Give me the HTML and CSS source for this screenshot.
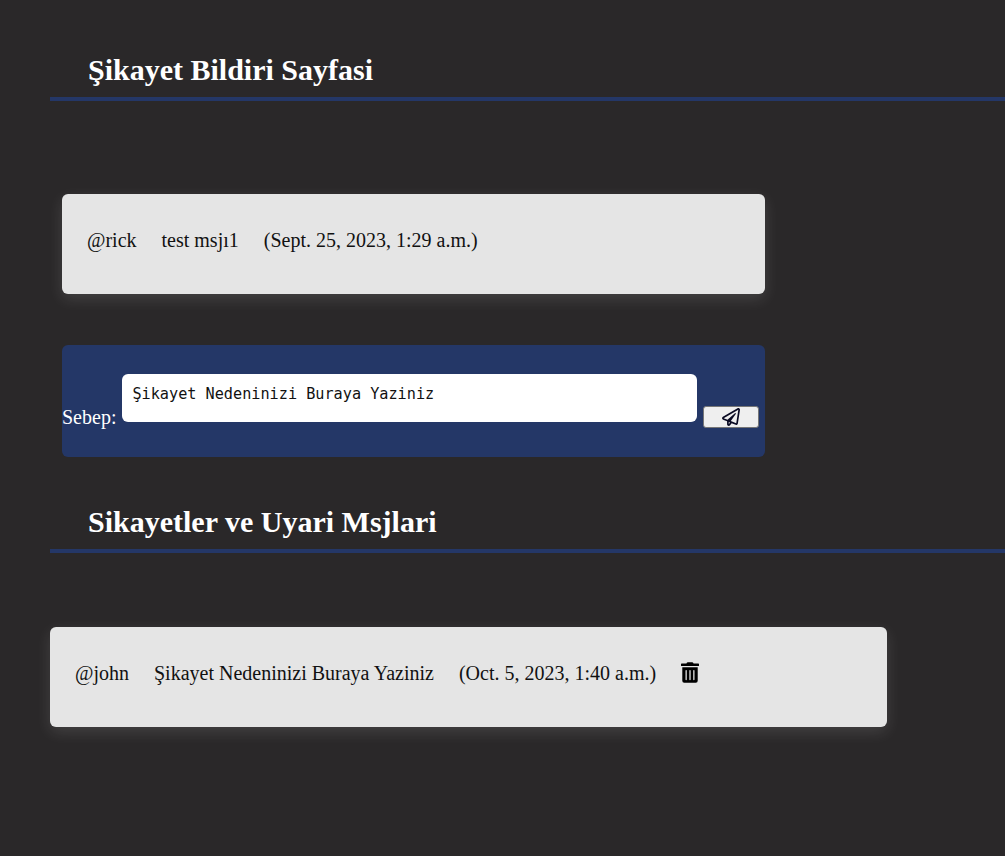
FILE: index.html

```html
<!DOCTYPE html>
<html lang="tr">
<head>
    <meta charset="UTF-8">
    <meta name="viewport" content="width=device-width, initial-scale=1.0">
    <title>Şikayet Bildiri Sayfasi</title>
    <link rel="stylesheet" href="styles.css">
</head>
<body>

    <div class="page">
        <h2 class="section-title">Şikayet Bildiri Sayfasi</h2>

        <div class="msg-card msg-card-top">
            <span class="msg-part">@rick</span>
            <span class="msg-part">test msjı1</span>
            <span class="msg-part">(Sept. 25, 2023, 1:29 a.m.)</span>
        </div>

        <form class="report-form">
            <label class="report-label" for="sebep">Sebep:</label>
            <textarea class="report-input" id="sebep" name="sebep">Şikayet Nedeninizi Buraya Yaziniz</textarea>
            <button class="report-send" type="button" aria-label="Gönder">
                <svg class="send-icon" viewBox="0 0 512 512"><path d="M440 6.5L24 246.4c-34.4 19.9-31.1 70.8 5.7 85.9L144 379.6V464c0 46.4 59.2 65.5 86.6 28.6l43.8-59.1 111.9 46.2c5.9 2.4 12.1 3.6 18.3 3.6 8.2 0 16.3-2.1 23.6-6.2 12.8-7.2 21.6-20 23.9-34.5l59.4-387.2c6.1-40.1-36.9-68.8-71.5-48.9zM192 464v-64.6l36.6 15.1L192 464zm212.6-28.7l-153.8-63.5L391 169.5c10.7-15.5-9.5-33.5-23.7-21.2L155.8 332.6 48 288 464 48l-59.4 387.3z"/></svg>
            </button>
        </form>

        <h2 class="section-title section-title-second">Sikayetler ve Uyari Msjlari</h2>

        <div class="msg-card msg-card-wide">
            <span class="msg-part">@john</span>
            <span class="msg-part">Şikayet Nedeninizi Buraya Yaziniz</span>
            <span class="msg-part">(Oct. 5, 2023, 1:40 a.m.)</span>
            <a class="msg-delete" href="#" aria-label="Sil">
                <svg class="trash-icon" viewBox="0 0 448 512"><path d="M32 464a48 48 0 0 0 48 48h288a48 48 0 0 0 48-48V128H32zm272-256a16 16 0 0 1 32 0v224a16 16 0 0 1-32 0zm-96 0a16 16 0 0 1 32 0v224a16 16 0 0 1-32 0zm-96 0a16 16 0 0 1 32 0v224a16 16 0 0 1-32 0zM432 32H312l-9.4-18.7A24 24 0 0 0 281.1 0H166.8a23.72 23.72 0 0 0-21.4 13.3L136 32H16A16 16 0 0 0 0 48v32a16 16 0 0 0 16 16h416a16 16 0 0 0 16-16V48a16 16 0 0 0-16-16z"/></svg>
            </a>
        </div>
    </div>

</body>
</html>
```

FILE: styles.css

```css
body {
    font-family: "Liberation Serif", "Times New Roman", serif;
    background-color: #2a2829;
    margin: 0;
    padding: 0;
    min-height: 856px;
}
.page {
    margin-left: 50px;
    padding-top: 50px;
}
.section-title {
    margin: 0;
    padding: 0 0 8px 38px;
    font-size: 30px;
    line-height: 39px;
    font-weight: bold;
    color: #fff;
    border-bottom: 4px solid #243767;
}
.section-title-second {
    margin-top: 45px;
}
.msg-card {
    display: flex;
    gap: 25px;
    height: 100px;
    box-sizing: border-box;
    padding: 34px 25px 0;
    font-size: 20px;
    line-height: 24px;
    color: #111;
    background-color: #e5e5e5;
    border-radius: 6px;
    box-shadow: 0 5px 15px rgba(255, 255, 255, 0.12);
}
.msg-card-top {
    width: 703px;
    margin: 93px 0 0 12px;
}
.msg-card-wide {
    width: 837px;
    margin-top: 74px;
}
.msg-delete {
    color: #000;
    display: block;
    margin-top: 1px;
}
.trash-icon {
    display: block;
    width: 18px;
    height: 21px;
    fill: currentColor;
}
.report-form {
    width: 703px;
    height: 112px;
    box-sizing: border-box;
    margin: 51px 0 0 12px;
    padding-top: 29px;
    color: #fff;
    font-size: 20px;
    background-color: #243767;
    border-radius: 6px;
}
.report-input {
    width: 575px;
    height: 48px;
    box-sizing: border-box;
    margin: 0 0 2px 1px;
    padding: 11px 10px 10px;
    border: none;
    border-radius: 6px;
    background-color: #fff;
    color: #111;
    font-family: "DejaVu Sans Mono", monospace;
    font-size: 15.2px;
    line-height: 18px;
    resize: none;
    outline: none;
}
.report-send {
    width: 56px;
    height: 22px;
    margin-left: 1px;
    padding: 0;
    background-color: #efefef;
    border: 1px solid #767676;
    border-radius: 3px;
    vertical-align: -3px;
}
.send-icon {
    display: block;
    width: 18px;
    height: 18px;
    margin: 0 auto;
    fill: #0a0a23;
}
```
